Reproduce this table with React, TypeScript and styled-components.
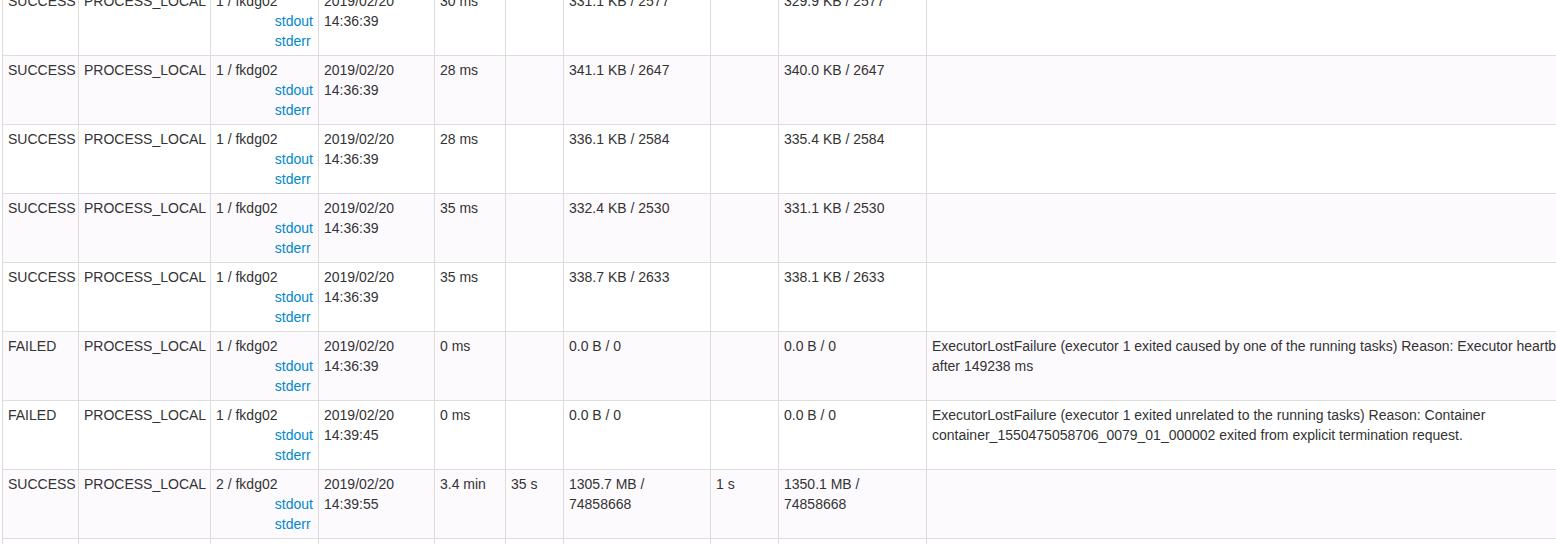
import React from "react";
import styled, { createGlobalStyle } from "styled-components";

const GlobalStyle = createGlobalStyle`
  html, body {
    margin: 0;
    padding: 0;
    background: #ffffff;
    overflow: hidden;
  }
  body {
    font-family: "Liberation Sans", Arial, Helvetica, sans-serif;
    font-size: 14px;
    line-height: 20px;
    color: #333333;
  }
`;

const Page = styled.div`
  padding-left: 2px;
  margin-top: -14px;
`;

const Table = styled.div`
  display: grid;
  grid-template-columns: 76px 132px 108px 116px 71px 58px 147px 68px 148px 740px;
  width: max-content;
  border-right: 1px solid #dddddd;
`;

const Row = styled.div<{ $striped: boolean }>`
  display: contents;
  & > div {
    background: ${(p) => (p.$striped ? "#fdfafe" : "#ffffff")};
  }
`;

const Cell = styled.div`
  box-sizing: border-box;
  border-left: 1px solid #dddddd;
  border-top: 1px solid #dddddd;
  padding: 4px 5px;
  min-height: 69px;
  text-align: left;
  vertical-align: top;
  white-space: normal;
`;

const HostCell = styled(Cell)`
  display: flex;
  flex-direction: column;
`;

const Links = styled.ul`
  list-style: none;
  margin: 0;
  padding: 0;
  align-self: flex-end;
`;

const LinkItem = styled.li`
  margin: 0;
  padding: 0;
`;

const Link = styled.a`
  color: #0088cc;
  text-decoration: none;
`;

interface Task {
  status: string;
  host: string;
  launch: [string, string];
  duration: string;
  gc: string;
  read: string;
  writeTime: string;
  write: string;
  error: string;
}

const tasks: Task[] = [
  { status: "SUCCESS", host: "1 / fkdg02", launch: ["2019/02/20", "14:36:39"], duration: "30 ms", gc: "", read: "331.1 KB / 2577", writeTime: "", write: "329.9 KB / 2577", error: "" },
  { status: "SUCCESS", host: "1 / fkdg02", launch: ["2019/02/20", "14:36:39"], duration: "28 ms", gc: "", read: "341.1 KB / 2647", writeTime: "", write: "340.0 KB / 2647", error: "" },
  { status: "SUCCESS", host: "1 / fkdg02", launch: ["2019/02/20", "14:36:39"], duration: "28 ms", gc: "", read: "336.1 KB / 2584", writeTime: "", write: "335.4 KB / 2584", error: "" },
  { status: "SUCCESS", host: "1 / fkdg02", launch: ["2019/02/20", "14:36:39"], duration: "35 ms", gc: "", read: "332.4 KB / 2530", writeTime: "", write: "331.1 KB / 2530", error: "" },
  { status: "SUCCESS", host: "1 / fkdg02", launch: ["2019/02/20", "14:36:39"], duration: "35 ms", gc: "", read: "338.7 KB / 2633", writeTime: "", write: "338.1 KB / 2633", error: "" },
  { status: "FAILED", host: "1 / fkdg02", launch: ["2019/02/20", "14:36:39"], duration: "0 ms", gc: "", read: "0.0 B / 0", writeTime: "", write: "0.0 B / 0", error: "ExecutorLostFailure (executor 1 exited caused by one of the running tasks) Reason: Executor heartbeat timed out after 149238 ms" },
  { status: "FAILED", host: "1 / fkdg02", launch: ["2019/02/20", "14:39:45"], duration: "0 ms", gc: "", read: "0.0 B / 0", writeTime: "", write: "0.0 B / 0", error: "ExecutorLostFailure (executor 1 exited unrelated to the running tasks) Reason: Container container_1550475058706_0079_01_000002 exited from explicit termination request." },
  { status: "SUCCESS", host: "2 / fkdg02", launch: ["2019/02/20", "14:39:55"], duration: "3.4 min", gc: "35 s", read: "1305.7 MB / 74858668", writeTime: "1 s", write: "1350.1 MB / 74858668", error: "" },
  { status: "SUCCESS", host: "2 / fkdg02", launch: ["2019/02/20", "14:39:55"], duration: "3.3 min", gc: "30 s", read: "1298.2 MB / 74412032", writeTime: "1 s", write: "1342.6 MB / 74412032", error: "" },
];

export default function App() {
  return (
    <>
      <GlobalStyle />
      <Page>
        <Table>
          {tasks.map((t, i) => (
            <Row key={i} $striped={i % 2 === 1}>
              <Cell>{t.status}</Cell>
              <Cell>PROCESS_LOCAL</Cell>
              <HostCell>
                <div>{t.host}</div>
                <Links>
                  <LinkItem>
                    <Link href="#">stdout</Link>
                  </LinkItem>
                  <LinkItem>
                    <Link href="#">stderr</Link>
                  </LinkItem>
                </Links>
              </HostCell>
              <Cell>
                {t.launch[0]}
                <br />
                {t.launch[1]}
              </Cell>
              <Cell>{t.duration}</Cell>
              <Cell>{t.gc}</Cell>
              <Cell>{t.read}</Cell>
              <Cell>{t.writeTime}</Cell>
              <Cell>{t.write}</Cell>
              <Cell>{t.error}</Cell>
            </Row>
          ))}
        </Table>
      </Page>
    </>
  );
}
